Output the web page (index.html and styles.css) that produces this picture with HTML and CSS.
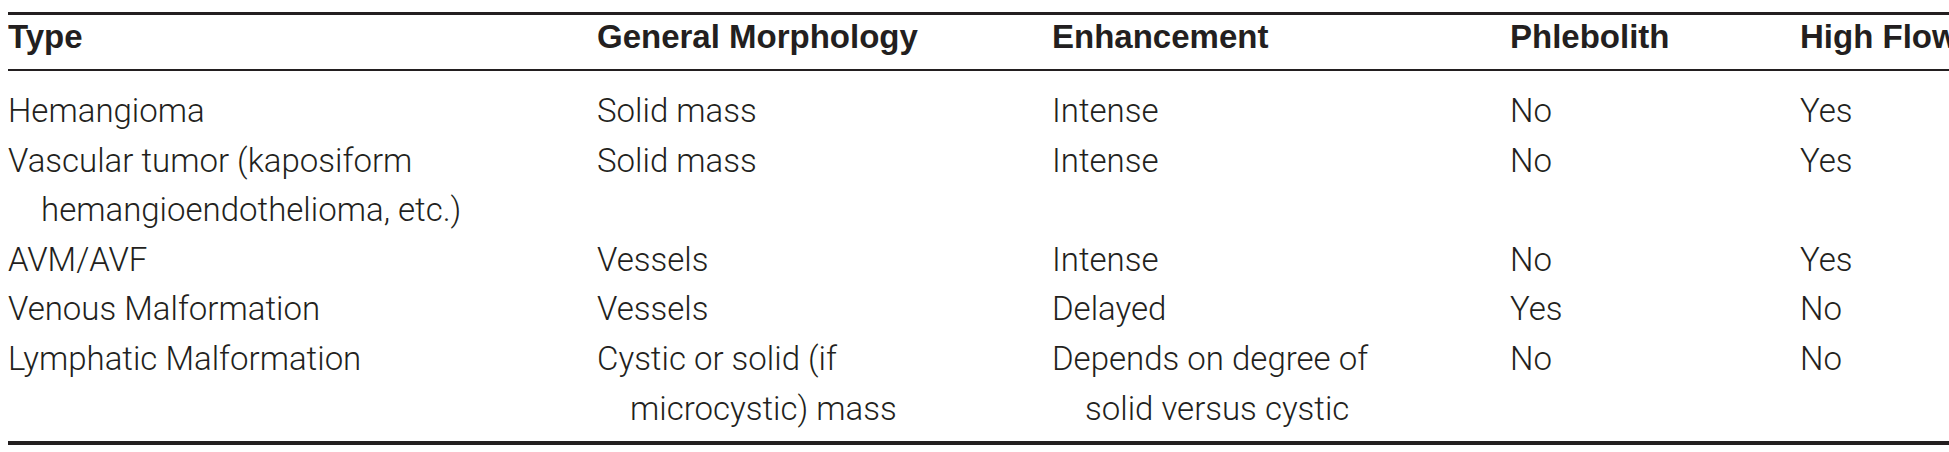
FILE: index.html
```html
<!DOCTYPE html>
<html lang="en">
<head>
<meta charset="utf-8">
<title>Vascular anomalies</title>
<link rel="stylesheet" href="styles.css">
</head>
<body>
<div class="tbl">
  <div class="row head">
    <div class="cell">Type</div>
    <div class="cell">General Morphology</div>
    <div class="cell">Enhancement</div>
    <div class="cell">Phlebolith</div>
    <div class="cell">High Flow</div>
  </div>
  <div class="body">
    <div class="row">
      <div class="cell">Hemangioma</div>
      <div class="cell">Solid mass</div>
      <div class="cell">Intense</div>
      <div class="cell">No</div>
      <div class="cell">Yes</div>
    </div>
    <div class="row">
      <div class="cell">Vascular tumor (kaposiform<br>hemangioendothelioma, etc.)</div>
      <div class="cell">Solid mass</div>
      <div class="cell">Intense</div>
      <div class="cell">No</div>
      <div class="cell">Yes</div>
    </div>
    <div class="row">
      <div class="cell">AVM/AVF</div>
      <div class="cell">Vessels</div>
      <div class="cell">Intense</div>
      <div class="cell">No</div>
      <div class="cell">Yes</div>
    </div>
    <div class="row">
      <div class="cell">Venous Malformation</div>
      <div class="cell">Vessels</div>
      <div class="cell">Delayed</div>
      <div class="cell">Yes</div>
      <div class="cell">No</div>
    </div>
    <div class="row">
      <div class="cell">Lymphatic Malformation</div>
      <div class="cell">Cystic or solid (if<br>microcystic) mass</div>
      <div class="cell">Depends on degree of<br>solid versus cystic</div>
      <div class="cell">No</div>
      <div class="cell">No</div>
    </div>
  </div>
</div>
</body>
</html>
```
FILE: styles.css
```css
html, body {
  margin: 0;
  padding: 0;
  background: #ffffff;
  overflow: hidden;
}

.tbl {
  margin: 12px 0 0 8px;
  width: 1941px;
  overflow: hidden;
  border-top: 3px solid #231f20;
  border-bottom: 4px solid #231f20;
  color: #231f20;
}

.row {
  display: grid;
  grid-template-columns: 589px 455px 458px 290px 300px;
  white-space: nowrap;
}

.head {
  border-bottom: 2px solid #231f20;
  padding: 3px 0 13px;
  font-family: "Liberation Sans", Arial, sans-serif;
  font-weight: 700;
  font-size: 33px;
  line-height: 38px;
}

.body {
  padding: 15px 0 8px;
  font-family: Roboto, "Liberation Sans", sans-serif;
  font-weight: 300;
  font-size: 33px;
  line-height: 49.6px;
}

.cell {
  padding-left: 33px;
  text-indent: -33px;
}
```
